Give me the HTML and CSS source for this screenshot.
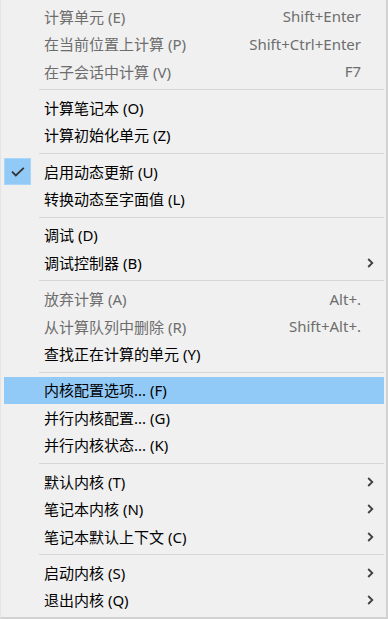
FILE: index.html
```html
<!DOCTYPE html>
<html lang="zh-CN">
<head>
<meta charset="utf-8">
<link rel="stylesheet" href="styles.css">
</head>
<body>
<div class="menu">
  <div class="item disabled"><span class="icon"></span><span class="label">计算单元 (E)</span><span class="key">Shift+Enter</span></div>
  <div class="item disabled"><span class="icon"></span><span class="label">在当前位置上计算 (P)</span><span class="key">Shift+Ctrl+Enter</span></div>
  <div class="item disabled"><span class="icon"></span><span class="label">在子会话中计算 (V)</span><span class="key">F7</span></div>
  <div class="sep"></div>
  <div class="item"><span class="icon"></span><span class="label">计算笔记本 (O)</span></div>
  <div class="item"><span class="icon"></span><span class="label">计算初始化单元 (Z)</span></div>
  <div class="sep"></div>
  <div class="item"><span class="icon"><span class="checkbox"><svg width="14" height="10" viewBox="0 0 14 10"><path d="M1 4.6 L4.8 8.4 L12.8 0.8" fill="none" stroke="#333" stroke-width="1.8"/></svg></span></span><span class="label">启用动态更新 (U)</span></div>
  <div class="item"><span class="icon"></span><span class="label">转换动态至字面值 (L)</span></div>
  <div class="sep"></div>
  <div class="item"><span class="icon"></span><span class="label">调试 (D)</span></div>
  <div class="item"><span class="icon"></span><span class="label">调试控制器 (B)</span><svg class="arrow" width="7" height="10" viewBox="0 0 7 10"><path d="M1.2 1 L5.3 5 L1.2 9" fill="none" stroke="#404040" stroke-width="1.8"/></svg></div>
  <div class="sep"></div>
  <div class="item disabled"><span class="icon"></span><span class="label">放弃计算 (A)</span><span class="key">Alt+.</span></div>
  <div class="item disabled"><span class="icon"></span><span class="label">从计算队列中删除 (R)</span><span class="key">Shift+Alt+.</span></div>
  <div class="item"><span class="icon"></span><span class="label">查找正在计算的单元 (Y)</span></div>
  <div class="sep"></div>
  <div class="item hl"><span class="icon"></span><span class="label">内核配置选项... (F)</span></div>
  <div class="item"><span class="icon"></span><span class="label">并行内核配置... (G)</span></div>
  <div class="item"><span class="icon"></span><span class="label">并行内核状态... (K)</span></div>
  <div class="sep"></div>
  <div class="item"><span class="icon"></span><span class="label">默认内核 (T)</span><svg class="arrow" width="7" height="10" viewBox="0 0 7 10"><path d="M1.2 1 L5.3 5 L1.2 9" fill="none" stroke="#404040" stroke-width="1.8"/></svg></div>
  <div class="item"><span class="icon"></span><span class="label">笔记本内核 (N)</span><svg class="arrow" width="7" height="10" viewBox="0 0 7 10"><path d="M1.2 1 L5.3 5 L1.2 9" fill="none" stroke="#404040" stroke-width="1.8"/></svg></div>
  <div class="item"><span class="icon"></span><span class="label">笔记本默认上下文 (C)</span><svg class="arrow" width="7" height="10" viewBox="0 0 7 10"><path d="M1.2 1 L5.3 5 L1.2 9" fill="none" stroke="#404040" stroke-width="1.8"/></svg></div>
  <div class="sep"></div>
  <div class="item"><span class="icon"></span><span class="label">启动内核 (S)</span><svg class="arrow" width="7" height="10" viewBox="0 0 7 10"><path d="M1.2 1 L5.3 5 L1.2 9" fill="none" stroke="#404040" stroke-width="1.8"/></svg></div>
  <div class="item"><span class="icon"></span><span class="label">退出内核 (Q)</span><svg class="arrow" width="7" height="10" viewBox="0 0 7 10"><path d="M1.2 1 L5.3 5 L1.2 9" fill="none" stroke="#404040" stroke-width="1.8"/></svg></div>
</div>
</body>
</html>
```
FILE: styles.css
```css
html, body {
  margin: 0;
  padding: 0;
  background: #f0f0f0;
}

.menu {
  box-sizing: border-box;
  width: 388px;
  height: 619px;
  background: #f0f0f0;
  border-left: 1px solid #e4e4e4;
  border-right: 2px solid #d2d2d2;
  border-bottom: 2px solid #d2d2d2;
  padding: 2.75px 2px 0 3px;
  font-family: "Noto Sans", "Noto Sans CJK SC", sans-serif;
  font-size: 15px;
  color: #000;
}

.item {
  display: flex;
  align-items: center;
  height: 27.5px;
}

.item.disabled {
  color: #6d6d6d;
}

.item.hl {
  background: #91c9f7;
}

.icon {
  flex: 0 0 40px;
  align-self: stretch;
  display: flex;
}

.checkbox {
  box-sizing: border-box;
  width: 27px;
  height: 100%;
  background: #91c9f7;
  border: 1px solid #a9d5fa;
  display: flex;
  align-items: center;
  justify-content: center;
}

.label {
  flex: 1;
  white-space: nowrap;
  padding-bottom: 1px;
}

.key {
  margin-right: 23px;
  white-space: nowrap;
  padding-bottom: 1px;
}

.arrow {
  margin-right: 10px;
}

.sep {
  height: 1px;
  background: #d7d7d7;
  margin: 3.75px 0 4px 35px;
}
```
